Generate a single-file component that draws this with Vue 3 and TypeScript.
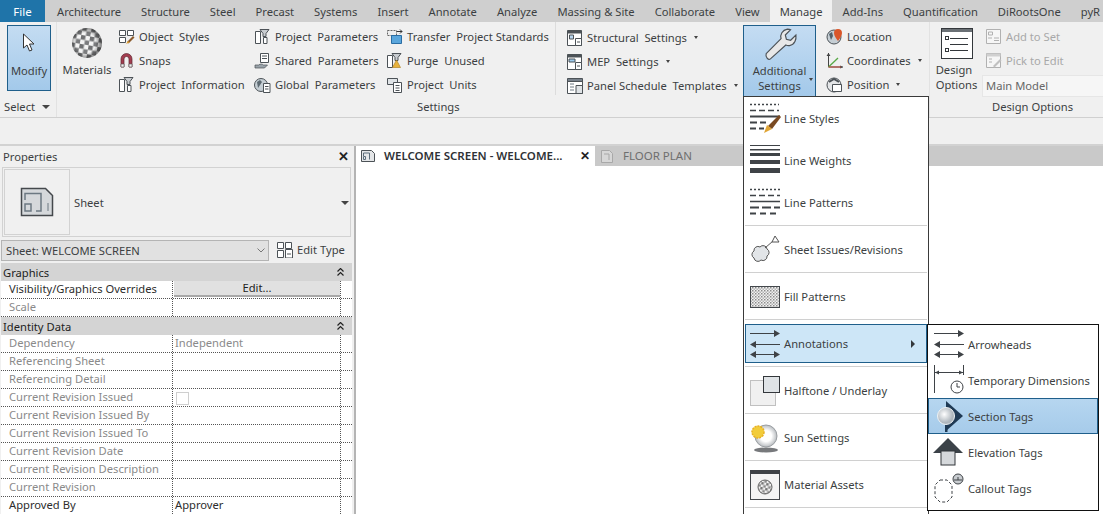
<script setup lang="ts">
interface ToolRow {
  icon: string
  label: string
  caret?: boolean
  off?: boolean
}
interface MenuRow {
  icon: string
  label: string
  tall?: boolean
  active?: boolean
}
interface PropRow {
  label: string
  value?: string
  strong?: boolean
}

const tabs = ['Architecture', 'Structure', 'Steel', 'Precast', 'Systems', 'Insert', 'Annotate', 'Analyze', 'Massing & Site', 'Collaborate', 'View', 'Manage', 'Add-Ins', 'Quantification', 'DiRootsOne', 'pyR']

const S = '#3f4347'
const arrows = `<g fill="none" stroke="${S}" stroke-width="1.200"><path d="M1 5.500h26M5 16.500h26M5 26.500h22"/></g><g fill="${S}"><path d="M31 5.500l-6-3.500v7zM1 16.500l6-3.500v7zM1 26.500l6-3.500v7zM31 26.500l-6-3.500v7z"/></g>`
const sheet = `<path d="M1.500 2.500h10l3 3v8h-13z" fill="#e4e6e8" stroke="#4c5257"/><path d="M3.500 11.500v-3h2v3zM3.500 8V5h6v6.500" fill="none" stroke="#5c6c7a"/>`
const checker = `<pattern id="chk" width="5" height="5" patternUnits="userSpaceOnUse" patternTransform="rotate(12)"><rect width="5" height="5" fill="#f2f2f2"/><rect width="2.500" height="2.500" fill="#777"/><rect x="2.500" y="2.500" width="2.500" height="2.500" fill="#8a8a8a"/></pattern>`

const icons: Record<string, string> = {
  objectStyles: `<path d="M1.500 2.500h6v5h-6zM9.500 2.500h6v5h-6zM1.500 9.500h6v5h-6z" fill="#fff" stroke="#4c5257"/><path d="M9 14l6-6 1.500 1.500-6 6z" fill="#8a5a2b"/><path d="M8 16l2-3 1.500 1.500z" fill="#e0a030"/>`,
  snaps: `<path d="M3 15V7a5.500 5.500 0 0 1 11 0v8h-3V7a2.500 2.500 0 0 0-5 0v8z" fill="#a33d4f" stroke="#5c2630" stroke-width=".7"/><path d="M3 12h3v3H3zM11 12h3v3h-3z" fill="#eee" stroke="#555" stroke-width=".6"/>`,
  projectInfo: `<path d="M1.500 3.500h5v12h-5z" fill="#fff" stroke="#4c5257"/><path d="M6 1.500h9l-3 4v3h-3v-3z" fill="#c8ccd0" stroke="#4c5257"/><path d="M9.500 9.500h3.500v6h-3.500z" fill="#fff" stroke="#4c5257"/>`,
  sharedParams: `<path d="M6.500 1.500h8v9h-8z" fill="#fff" stroke="#4c5257"/><path d="M8 4h5M8 6.500h5" stroke="#4c5257" fill="none"/><path d="M1 13h3.500c2-1.500 4-1 5 0h4l-3 3H1z" fill="#9aa3aa" stroke="#4c5257" stroke-width=".7"/>`,
  globalParams: `<circle cx="7" cy="9" r="6.500" fill="#c5ced4" stroke="#4c5257"/><path d="M3 6l3-2 2 2-2 3-2 3z" fill="#5d6a72"/><path d="M9.500 7.500h6.500v9h-6.500z" fill="#fff" stroke="#4c5257"/><path d="M11 10.500h3.500M11 13h3.500" stroke="#4c5257"/>`,
  transfer: `<path d="M1.500 2.500h9v5h-9z" fill="#eee" stroke="#666" stroke-dasharray="2 1"/><path d="M5.500 7.500h10v8h-10z" fill="#5aa6dc" stroke="#2a6da3"/><path d="M11 3.500h5M14 1.500l2 2-2 2" fill="none" stroke="#333"/>`,
  purge: `<path d="M1.500 3.500h5v12h-5z" fill="#fff" stroke="#4c5257"/><path d="M6 1.500h9l-3 4v3h-3v-3z" fill="#c8ccd0" stroke="#4c5257"/><path d="M10.500 8l4 7.500h-8z" fill="#e8b23c" stroke="#a77a18" stroke-width=".6"/>`,
  units: `<path d="M1.500 2.500h10v6h-10z" fill="#dfe3e6" stroke="#4c5257"/><path d="M7.500 6.500h8v10h-8z" fill="#fff" stroke="#4c5257"/><path d="M9.500 9.500h4M9.500 12h4M9.500 14.500h4" stroke="#4c5257"/>`,
  structural: `<path d="M1.500 1.500h14v15h-14z" fill="#fff" stroke="#4c5257"/><path d="M1.500 1.500h14v3h-14z" fill="#4c5257"/><path d="M3.500 6h4v4h-4z" fill="#b8d6ef" stroke="#4c5257"/><path d="M9.500 9.500h6v7h-6z" fill="#fff" stroke="#4c5257"/><path d="M11 13h3" stroke="#4c5257"/>`,
  mep: `<path d="M1.500 1.500h14v15h-14z" fill="#fff" stroke="#4c5257"/><path d="M1.500 1.500h14v3h-14z" fill="#4c5257"/><path d="M3 6h6v3H3z" fill="#9ccbee" stroke="#4c5257"/><path d="M9.500 9.500h6v7h-6z" fill="#fff" stroke="#4c5257"/><path d="M11 13h3" stroke="#4c5257"/>`,
  panel: `<path d="M1.500 3.500h15v13h-15z" fill="#fff" stroke="#4c5257"/><path d="M1.500 1.500h15v3h-15z" fill="#77808a" stroke="#4c5257"/><path d="M4 7h4M4 10h4M4 13h4" stroke="#6f7a84"/><path d="M10 8.500h6.500v8H10z" fill="#dfe3e6" stroke="#4c5257"/>`,
  location: `<circle cx="8" cy="9" r="7" fill="#c5ced4" stroke="#4c5257"/><path d="M3 6l3-2 1 4-2 4z" fill="#52616b"/><path d="M12 13c-2-3-4-5-4-8a4 4 0 0 1 8 0c0 3-2 5-4 8z" fill="#d9562a"/>`,
  coordinates: `<path d="M2.500 1v14H17" fill="none" stroke="#444"/><path d="M2.500 1l-2 3h4zM17 15l-3-1.500v3z" fill="#444"/><path d="M2.500 15L12 6" stroke="#57a845" stroke-width="1.300"/><path d="M2.500 15H15" stroke="#c84a3a" stroke-width="1"/>`,
  position: `<circle cx="8" cy="9" r="7" fill="#e4e6e8" stroke="#4c5257"/><path d="M3 6l5-3 5 3" fill="none" stroke="#4c5257" stroke-width="2"/><path d="M6.500 8.500h9v7h-9z" fill="#fff" stroke="#4c5257"/>`,
  addSet: `<g opacity=".45"><path d="M1.500 1.500h14v14h-14z" fill="#fff" stroke="#666"/><path d="M3.500 4h4v3h-4zM3 10h4M9 10h5M9 12.500h5" fill="none" stroke="#666"/></g>`,
  pickEdit: `<g opacity=".45"><path d="M1.500 1.500h14v14h-14z" fill="#fff" stroke="#666"/><path d="M1.500 1.500h14v3h-14z" fill="#aaa"/><path d="M4 7h3M4 10h3" stroke="#666"/><path d="M8 14l7-7 1.500 1.500-7 7z" fill="#888"/></g>`,
  sheetDoc: sheet,
  editType: `<path d="M1.500 1.500h6v6h-6zM9.500 1.500h6v6h-6zM1.500 9.500h6v7h-6z" fill="#fff" stroke="#4c5257"/><path d="M9.500 8.500h7v8.500h-7z" fill="#fff" stroke="#4c5257"/><path d="M11 13h4" stroke="#4c5257"/>`,
  floorPlan: `<g opacity=".4"><path d="M1.500 2.500h8l3 3v9h-11z" fill="#eee" stroke="#777"/><path d="M4 6h5v6" fill="none" stroke="#777"/></g>`,

  lineStyles: `<g stroke="${S}" fill="none"><path d="M1 2.500h29" stroke-width="1.300" stroke-dasharray="2 2"/><path d="M1 8.500h29" stroke-width="1.500" stroke-dasharray="6 3"/><path d="M1 14.500h30" stroke-width="2"/><path d="M1 20.500h16" stroke-width="1.800" stroke-dasharray="7 3"/><path d="M1 26.500h14" stroke-width="2" stroke-dasharray="6 3"/></g><path d="M19 24l11-11 2 2-9 12z" fill="#7a4a22"/><path d="M15 31l3-8 5 4z" fill="#e0a535"/>`,
  lineWeights: `<g fill="${S}"><rect x="1" y="1" width="30" height="1"/><rect x="1" y="5" width="30" height="1.500"/><rect x="1" y="9" width="30" height="3"/><rect x="1" y="16" width="30" height="4"/><rect x="1" y="24" width="30" height="5"/></g>`,
  linePatterns: `<g stroke="${S}" fill="none"><path d="M1 3.500h30" stroke-width="1.300" stroke-dasharray="2 2"/><path d="M1 9.500h30" stroke-width="1.500" stroke-dasharray="6 3"/><path d="M1 15.500h30" stroke-width="1.500"/><path d="M1 21.500h30" stroke-width="2" stroke-dasharray="9 3"/><path d="M1 27.500h30" stroke-width="2" stroke-dasharray="6 4"/></g>`,
  sheetIssues: `<path d="M5 17a4 4 0 0 1 6-4a4 4 0 0 1 7 2a4 4 0 0 1 0 7a4 4 0 0 1-6 4a4 4 0 0 1-7-2a4 4 0 0 1 0-7z" fill="#e2e5e8" stroke="#555"/><path d="M16 14l8-7" stroke="#555" fill="none"/><path d="M26 2l4 6h-7z" fill="#fff" stroke="#555"/>`,
  fillPatterns: `<defs><pattern id="hatch" width="3" height="3" patternUnits="userSpaceOnUse"><rect width="3" height="3" fill="#f2f2f2"/><rect width="1.500" height="1.500" fill="#8c8c8c"/><rect x="1.500" y="1.500" width="1.500" height="1.500" fill="#b5b5b5"/></pattern></defs><rect x="1.500" y="5.500" width="29" height="21" fill="url(#hatch)" stroke="#44484c"/>`,
  arrows,
  halftone: `<rect x="1.500" y="5.500" width="25" height="25" fill="#f0f0f0" stroke="#c0c0c0"/><rect x="14.500" y="1.500" width="16" height="16" fill="#dfe3e6" stroke="#33373b"/>`,
  sun: `<defs><radialGradient id="moon"><stop offset=".5" stop-color="#fff"/><stop offset="1" stop-color="#b8bcc0"/></radialGradient></defs><circle cx="17" cy="14" r="11" fill="url(#moon)" stroke="#9a9ea2"/><circle cx="9" cy="10" r="6" fill="#f2cc3a" stroke="#e8b020" stroke-width="1.500" stroke-dasharray="2 1"/><ellipse cx="17" cy="28" rx="12" ry="2.500" fill="#77797c"/>`,
  assets: `<defs>${checker}</defs><rect x="1.500" y="1.500" width="29" height="29" fill="#f4f4f4" stroke="#44484c"/><rect x="1" y="1" width="30" height="4" fill="#3e4246"/><circle cx="16" cy="18" r="7" fill="url(#chk)" stroke="#666"/>`,
  tempDim: `<g stroke="${S}" fill="none"><path d="M1.500 1v28M30.500 1v10M2 8.500h28"/><circle cx="24" cy="23" r="6" fill="#fff"/><path d="M24 19v4h3"/></g><path d="M2 8.500l4-2v4zM30 8.500l-4-2v4z" fill="${S}"/>`,
  sectionTag: `<defs><radialGradient id="disc" cx=".4" cy=".4"><stop offset="0" stop-color="#fff"/><stop offset="1" stop-color="#aeb6bd"/></radialGradient></defs><path d="M13 1l17 15-17 15z" fill="#1f3a55"/><rect x="12" y="24" width="2.500" height="8" fill="#1f3a55"/><circle cx="13" cy="16" r="8.500" fill="url(#disc)" stroke="#eef2f5"/>`,
  elevationTag: `<path d="M15 2L30 17H0z" fill="#3b4248"/><rect x="8" y="15" width="14" height="14" fill="#d5d8db" stroke="#33373b"/>`,
  calloutTag: `<path d="M7 8h7l5 5v12l-5 5H7l-5-5V13z" fill="none" stroke="#3f4347" stroke-dasharray="3 2"/><circle cx="25" cy="7" r="5" fill="#c8ccd0" stroke="#3f4347"/><path d="M21 8h8M25 8V5" stroke="#3f4347"/>`
}

const colOne: ToolRow[] = [
  { icon: 'objectStyles', label: 'Object  Styles' },
  { icon: 'snaps', label: 'Snaps' },
  { icon: 'projectInfo', label: 'Project  Information' }
]
const colTwo: ToolRow[] = [
  { icon: 'projectInfo', label: 'Project  Parameters' },
  { icon: 'sharedParams', label: 'Shared  Parameters' },
  { icon: 'globalParams', label: 'Global  Parameters' }
]
const colThree: ToolRow[] = [
  { icon: 'transfer', label: 'Transfer  Project Standards' },
  { icon: 'purge', label: 'Purge  Unused' },
  { icon: 'units', label: 'Project  Units' }
]
const colFour: ToolRow[] = [
  { icon: 'structural', label: 'Structural  Settings', caret: true },
  { icon: 'mep', label: 'MEP  Settings', caret: true },
  { icon: 'panel', label: 'Panel Schedule  Templates', caret: true }
]
const colFive: ToolRow[] = [
  { icon: 'location', label: 'Location' },
  { icon: 'coordinates', label: 'Coordinates', caret: true },
  { icon: 'position', label: 'Position', caret: true }
]
const colSix: ToolRow[] = [
  { icon: 'addSet', label: 'Add to Set', off: true },
  { icon: 'pickEdit', label: 'Pick to Edit', off: true }
]

const menuRows: MenuRow[] = [
  { icon: 'lineStyles', label: 'Line Styles', tall: false },
  { icon: 'lineWeights', label: 'Line Weights', tall: false },
  { icon: 'linePatterns', label: 'Line Patterns', tall: false },
  { icon: 'sheetIssues', label: 'Sheet Issues/Revisions', tall: true },
  { icon: 'fillPatterns', label: 'Fill Patterns', tall: true },
  { icon: 'arrows', label: 'Annotations', tall: true, active: true },
  { icon: 'halftone', label: 'Halftone / Underlay', tall: true },
  { icon: 'sun', label: 'Sun Settings', tall: true },
  { icon: 'assets', label: 'Material Assets', tall: true }
]
const subRows: MenuRow[] = [
  { icon: 'arrows', label: 'Arrowheads' },
  { icon: 'tempDim', label: 'Temporary Dimensions' },
  { icon: 'sectionTag', label: 'Section Tags', active: true },
  { icon: 'elevationTag', label: 'Elevation Tags' },
  { icon: 'calloutTag', label: 'Callout Tags' }
]

const identityRows: PropRow[] = [
  { label: 'Dependency', value: 'Independent' },
  { label: 'Referencing Sheet' },
  { label: 'Referencing Detail' },
  { label: 'Current Revision Issued', value: 'check' },
  { label: 'Current Revision Issued By' },
  { label: 'Current Revision Issued To' },
  { label: 'Current Revision Date' },
  { label: 'Current Revision Description' },
  { label: 'Current Revision' },
  { label: 'Approved By', value: 'Approver', strong: true }
]
</script>

<template>
  <div class="app">
    <nav class="tabs">
      <span class="file-tab">File</span>
      <span v-for="t in tabs" :key="t" class="tab" :class="{ current: t === 'Manage' }">{{ t }}</span>
    </nav>

    <section class="ribbon">
      <div class="group select-group">
        <div class="big-btn modify">
          <svg class="cursor" viewBox="0 0 14 20" width="14" height="20">
            <path d="M1.500 1v14l3.500-3 2.500 6 2.500-1-2.500-6h4.500z" fill="#fff" stroke="#333" />
          </svg>
          <span>Modify</span>
        </div>
        <div class="group-label">Select <i class="caret" /></div>
      </div>

      <div class="group settings-group">
        <div class="group-body">
          <div class="materials">
            <svg viewBox="0 0 32 32" width="32" height="32">
              <defs>
                <pattern id="ball" width="9" height="9" patternUnits="userSpaceOnUse" patternTransform="rotate(10 16 16)">
                  <rect width="9" height="9" fill="#f4f4f4" />
                  <rect width="4.500" height="4.500" fill="#6f7072" />
                  <rect x="4.500" y="4.500" width="4.500" height="4.500" fill="#7b7c7e" />
                </pattern>
                <radialGradient id="ballShade" cx=".45" cy=".5" r=".55">
                  <stop offset=".6" stop-color="#000" stop-opacity="0" />
                  <stop offset="1" stop-color="#222" stop-opacity=".55" />
                </radialGradient>
              </defs>
              <circle cx="16" cy="16" r="15" fill="url(#ball)" />
              <circle cx="16" cy="16" r="15" fill="url(#ballShade)" />
            </svg>
            <span>Materials</span>
          </div>
          <div class="tool-col c1">
            <div v-for="r in colOne" :key="r.label" class="tool"><svg class="ic" viewBox="0 0 17 17" v-html="icons[r.icon]" /><span>{{ r.label }}</span></div>
          </div>
          <div class="tool-col c2">
            <div v-for="r in colTwo" :key="r.label" class="tool"><svg class="ic" viewBox="0 0 17 17" v-html="icons[r.icon]" /><span>{{ r.label }}</span></div>
          </div>
          <div class="tool-col c3">
            <div v-for="r in colThree" :key="r.label" class="tool"><svg class="ic" viewBox="0 0 17 17" v-html="icons[r.icon]" /><span>{{ r.label }}</span></div>
          </div>
          <div class="tool-col c4">
            <div v-for="r in colFour" :key="r.label" class="tool"><svg class="ic" viewBox="0 0 17 17" v-html="icons[r.icon]" /><span>{{ r.label }}</span><i class="caret small" /></div>
          </div>
          <div class="big-btn additional">
            <svg viewBox="0 0 32 32" width="34" height="34">
              <path d="M3 25L17 11c-1-4 1-8 6-9 1 0 2 0 3 .5l-5 5 1 4 4 1 5-5c.5 4-1 9-6 10-1.500.3-2.500 0-3.500-.5L7 30c-2 1.500-5-2-4-5z" fill="#e8e8e8" stroke="#4c5257" stroke-width="1.100" />
            </svg>
            <span class="two-line">Additional<br />Settings</span>
            <i class="caret small add-caret" />
          </div>
          <div class="tool-col c5">
            <div v-for="r in colFive" :key="r.label" class="tool"><svg class="ic" viewBox="0 0 17 17" v-html="icons[r.icon]" /><span>{{ r.label }}</span><i v-if="r.caret" class="caret small" /></div>
          </div>
        </div>
        <div class="group-label settings-label">Settings</div>
      </div>

      <div class="group options-group">
        <div class="group-body">
          <div class="design-btn">
            <svg viewBox="0 0 32 32" width="32" height="32">
              <rect x=".5" y=".5" width="31" height="30" fill="#fff" stroke="#33373b" />
              <rect x="1" y="1" width="30" height="3" fill="#6a7075" />
              <path d="M9 10.500h18M9 16.500h18M9 22.500h18" stroke="#33373b" />
              <rect x="4.500" y="8.500" width="3" height="3" fill="#fff" stroke="#33373b" />
              <rect x="4.500" y="20.500" width="3" height="3" fill="#fff" stroke="#33373b" />
            </svg>
            <span class="two-line">Design<br />Options</span>
          </div>
          <div class="options-col">
            <div v-for="r in colSix" :key="r.label" class="tool off"><svg class="ic" viewBox="0 0 17 17" v-html="icons[r.icon]" /><span>{{ r.label }}</span></div>
            <div class="model-box">Main Model</div>
          </div>
        </div>
        <div class="group-label options-label">Design Options</div>
      </div>
    </section>
    <div class="ribbon-gap" />

    <main class="workspace">
      <aside class="props">
        <header class="props-title"><span>Properties</span><b class="close">✕</b></header>
        <div class="type-box">
          <div class="type-thumb">
            <svg viewBox="0 0 34 30" width="34" height="30">
              <path d="M1.500 1.500h24l7 7v20h-31z" fill="#d5d8db" stroke="#44484c" stroke-width="1.500" />
              <path d="M5 24v-7h6v7zM5 13V6.500h16V24h-5" fill="none" stroke="#6c7882" stroke-width="1.500" />
              <path d="M28 16v8" stroke="#6c7882" />
            </svg>
          </div>
          <span>Sheet</span>
          <i class="caret type-caret" />
        </div>
        <div class="combo-row">
          <div class="combo">
            <span>Sheet: WELCOME SCREEN</span>
            <svg viewBox="0 0 8 5" width="8" height="5"><path d="M.5.500L4 4 7.500.500" fill="none" stroke="#777" /></svg>
          </div>
          <div class="edit-type"><svg class="ic" viewBox="0 0 17 17" v-html="icons.editType" /><span>Edit Type</span></div>
        </div>
        <div class="prop-table">
          <div class="prop-head">
            <span>Graphics</span>
            <svg class="fold" viewBox="0 0 7 8" width="7" height="8"><path d="M.5 3.500l3-3 3 3M.5 7.500l3-3 3 3" fill="none" stroke="#222" stroke-width="1.200" /></svg>
          </div>
          <div class="prop-row strong">
            <span class="p-name">Visibility/Graphics Overrides</span>
            <span class="p-value"><span class="edit-btn">Edit...</span></span>
            <span />
          </div>
          <div class="prop-row"><span class="p-name">Scale</span><span class="p-value" /><span /></div>
          <div class="prop-head">
            <span>Identity Data</span>
            <svg class="fold" viewBox="0 0 7 8" width="7" height="8"><path d="M.5 3.500l3-3 3 3M.5 7.500l3-3 3 3" fill="none" stroke="#222" stroke-width="1.200" /></svg>
          </div>
          <div v-for="r in identityRows" :key="r.label" class="prop-row" :class="{ strong: r.strong }">
            <span class="p-name">{{ r.label }}</span>
            <span class="p-value"><i v-if="r.value === 'check'" class="check" /><template v-else>{{ r.value }}</template></span>
            <span />
          </div>
        </div>
      </aside>

      <section class="doc">
        <div class="doc-tabs">
          <div class="doc-tab open">
            <svg class="ic" viewBox="0 0 17 17" v-html="icons.sheetDoc" />
            <span class="doc-name">WELCOME SCREEN - WELCOME...</span>
            <b class="doc-x">✕</b>
          </div>
          <div class="doc-tab shut">
            <svg class="ic" viewBox="0 0 17 17" v-html="icons.floorPlan" />
            <span>FLOOR PLAN</span>
          </div>
        </div>
      </section>
    </main>

    <div class="menu">
      <div v-for="m in menuRows" :key="m.label" class="menu-row" :class="{ tall: m.tall, active: m.active }">
        <div class="menu-inner">
          <svg class="ic-big" viewBox="0 0 32 32" v-html="icons[m.icon]" />
          <span>{{ m.label }}</span>
          <i v-if="m.active" class="arrow-right" />
        </div>
      </div>
      <div class="submenu">
        <div v-for="s in subRows" :key="s.label" class="sub-row" :class="{ active: s.active }">
          <svg class="ic-big" viewBox="0 0 32 32" v-html="icons[s.icon]" />
          <span>{{ s.label }}</span>
        </div>
      </div>
    </div>
  </div>
</template>

<style>
html, body { margin: 0; background: #fff; }
</style>

<style scoped>
.app {
  position: relative;
  width: 1103px;
  height: 514px;
  overflow: hidden;
  background: #fff;
  color: #3c3f42;
  font-family: "Noto Sans", sans-serif;
  font-size: 11.2px;
  line-height: 15px;
}
.tabs {
  display: flex;
  align-items: center;
  height: 22px;
  background: #cfcfcf;
  white-space: nowrap;
}
.file-tab {
  flex: none;
  width: 45px;
  height: 22px;
  line-height: 23px;
  text-align: center;
  background: #1f74a9;
  color: #fff;
  margin-right: 2px;
  font-size: 11.5px;
}
.tab {
  flex: none;
  height: 22px;
  line-height: 23px;
  padding: 0 10px;
}
.tab.current { background: #f0f0f0; }

.ribbon {
  display: flex;
  height: 96px;
  background: #f0f0f0;
  border-bottom: 1px solid #d0d0d0;
  box-sizing: border-box;
  white-space: pre;
}
.group { display: flex; flex-direction: column; }
.group-body { display: flex; height: 75px; }
.group-label {
  height: 20px;
  line-height: 20px;
  text-align: center;
}
.select-group { width: 57px; border-right: 1px solid #e2e2e2; box-sizing: border-box; }
.settings-group { width: 873px; border-right: 1px solid #e2e2e2; box-sizing: border-box; }
.settings-label { text-align: left; padding-left: 360px; }
.options-group { width: 173px; }
.options-label { padding-left: 32px; }

.big-btn {
  display: flex;
  flex-direction: column;
  align-items: center;
  box-sizing: border-box;
  height: 72px;
  margin-top: 3px;
  background: linear-gradient(#c4dcf2, #a3c9ea);
  border: 1px solid #1f5f8b;
  text-align: center;
}
.modify { width: 44px; margin-left: 7px; margin-bottom: 3px; }
.modify .cursor { margin: 7px 0 10px; }
.select-group .group-label { padding-right: 2px; margin-top: 3px; }
.additional { position: relative; width: 73px; flex: none; }
.additional svg { margin-top: 1px; }
.add-caret { position: absolute; right: 2px; top: 52px; margin: 0; }
.two-line { line-height: 15px; display: block; margin-top: 2px; }

.caret {
  display: inline-block;
  width: 0;
  height: 0;
  margin-left: 4px;
  vertical-align: 2px;
  border-left: 4px solid transparent;
  border-right: 4px solid transparent;
  border-top: 4px solid #444;
}
.caret.small {
  margin-left: 7px;
  border-left-width: 2.500px;
  border-right-width: 2.500px;
  border-top-width: 3px;
}

.materials {
  display: flex;
  flex-direction: column;
  align-items: center;
  width: 60px;
  flex: none;
  padding-top: 5px;
}
.materials span { margin-top: 3px; }
.tool-col { flex: none; padding-top: 2px; }
.tool {
  display: flex;
  align-items: center;
  height: 24px;
}
.ic { width: 17px; height: 17px; flex: none; margin-right: 4px; }
.c1 { width: 136px; margin-left: 1px; }
.c2 { width: 132px; }
.c3 { width: 170px; border-right: 1px solid #dcdcdc; height: 73px; box-sizing: border-box; }
.c4 { width: 187px; padding-left: 10px; padding-top: 3px; box-sizing: border-box; }
.c5 { width: 112px; padding-left: 10px; box-sizing: border-box; padding-top: 2px; }

.design-btn {
  display: flex;
  flex-direction: column;
  align-items: center;
  width: 50px;
  flex: none;
  padding: 6px 1px 0 4px;
  box-sizing: border-box;
}
.options-col { flex: 1; padding: 2px 0 0 2px; }
.options-col .tool { padding-left: 3px; }
.off { color: #a8a8a8; }
.model-box {
  height: 20px;
  line-height: 19px;
  margin-top: 3px;
  padding-left: 3px;
  background: #f6f6f6;
  color: #666;
  border: 1px solid #e6e6e6;
  border-right: none;
}
.ribbon-gap { height: 26px; background: #f0f0f0; }

.workspace {
  display: flex;
  height: 370px;
  border-top: 2px solid #d2d2d2;
}
.props {
  width: 356px;
  flex: none;
  background: #f0f0f0;
  border-right: 2px solid #b4b4b4;
  box-sizing: border-box;
  padding-left: 1px;
}
.props-title {
  display: flex;
  justify-content: space-between;
  align-items: center;
  height: 21px;
  padding: 0 5px 0 2px;
}
.close { font-size: 13px; color: #222; }
.type-box {
  display: flex;
  align-items: center;
  width: 349px;
  height: 70px;
  margin-left: 1px;
  box-sizing: border-box;
  border: 1px solid #d2d2d2;
  padding-left: 1px;
  position: relative;
}
.type-thumb {
  display: flex;
  align-items: center;
  justify-content: center;
  width: 66px;
  height: 66px;
  box-sizing: border-box;
  border: 1px solid #d2d2d2;
  margin-right: 4px;
}
.type-caret { position: absolute; right: 1px; top: 33px; }
.combo-row {
  display: flex;
  align-items: center;
  height: 21px;
  margin-top: 3px;
}
.combo {
  display: flex;
  justify-content: space-between;
  align-items: center;
  width: 268px;
  height: 21px;
  box-sizing: border-box;
  padding: 0 3px 0 4px;
  background: #e1e1e1;
  border: 1px solid #b4b4b4;
}
.edit-type { display: flex; align-items: center; margin-left: 7px; margin-bottom: 3px; }
.prop-table { width: 351px; margin-top: 2px; background: #fff; }
.prop-head {
  display: flex;
  justify-content: space-between;
  align-items: center;
  height: 18px;
  line-height: 17px;
  padding: 0 8px 0 2px;
  background: #d4d4d4;
  color: #222;
}
.prop-row {
  display: grid;
  grid-template-columns: 171px 168px 12px;
  height: 18px;
  line-height: 16px;
  box-sizing: border-box;
  border-bottom: 1px dotted #555;
  color: #8a8a8a;
}
.prop-row > span + span { border-left: 1px dotted #555; }
.prop-row.strong { color: #2d2d2d; }
.p-name { padding-left: 8px; }
.p-value { padding-left: 2px; }
.edit-btn {
  display: block;
  height: 16px;
  line-height: 14px;
  margin-left: -1px;
  text-align: center;
  color: #222;
  background: #e1e1e1;
  border-bottom: 2px solid #a8a8a8;
  box-sizing: border-box;
}
.check {
  display: block;
  width: 13px;
  height: 13px;
  margin-top: 3px;
  margin-left: 1px;
  background: #fff;
  border: 1px solid #cfcfcf;
  box-sizing: border-box;
}

.doc { flex: 1; }
.doc-tabs { display: flex; height: 20px; background: #c9c9c9; }
.doc-tab { display: flex; align-items: center; line-height: 18px; }
.doc-tab.open { width: 239px; background: #fff; padding-left: 4px; box-sizing: border-box; }
.doc-tab.open .ic { margin-right: 7px; }
.doc-name { font-weight: 600; font-size: 11.5px; color: #2f3236; white-space: nowrap; }
.doc-x { font-size: 12px; color: #222; margin-left: auto; margin-right: 5px; }
.doc-tab.shut { padding-left: 5px; color: #6e6e6e; font-size: 11.5px; }
.doc-tab.shut .ic { margin-right: 6px; }

.menu {
  position: absolute;
  left: 743px;
  top: 96px;
  width: 186px;
  height: 430px;
  box-sizing: border-box;
  background: #fff;
  border: 1px solid #3a3a3a;
}
.menu-row {
  height: 42px;
  margin: 0 1px;
}
.menu-row.tall {
  height: 47px;
  padding: 4px 0 3px;
  box-sizing: border-box;
  border-bottom: 1px solid #d0d0d0;
}
.menu-row:nth-child(3) { height: 45px; border-bottom: 1px solid #d0d0d0; box-sizing: border-box; }
.menu-row:nth-child(3) .menu-inner { height: 42px; }
.menu-inner {
  display: flex;
  align-items: center;
  height: 100%;
  box-sizing: border-box;
  padding-left: 4px;
}
.ic-big { width: 32px; height: 32px; flex: none; margin-right: 3px; }
.menu-row.active .menu-inner {
  background: #cde6f7;
  border: 1px solid #1f5f8b;
  padding-left: 3px;
}
.arrow-right {
  margin-left: auto;
  margin-right: 11px;
  border-top: 4px solid transparent;
  border-bottom: 4px solid transparent;
  border-left: 4px solid #33373b;
}
.submenu {
  position: absolute;
  left: 183px;
  top: 227px;
  width: 172px;
  height: 187px;
  box-sizing: border-box;
  padding-top: 1px;
  background: #fff;
  border: 1px solid #111;
}
.sub-row {
  display: flex;
  align-items: center;
  height: 36px;
  box-sizing: border-box;
  padding-left: 5px;
}
.sub-row.active {
  background: linear-gradient(#b6d6f0, #a6cbea);
  border: 1px solid #1f5f8b;
  padding-left: 4px;
}
</style>
